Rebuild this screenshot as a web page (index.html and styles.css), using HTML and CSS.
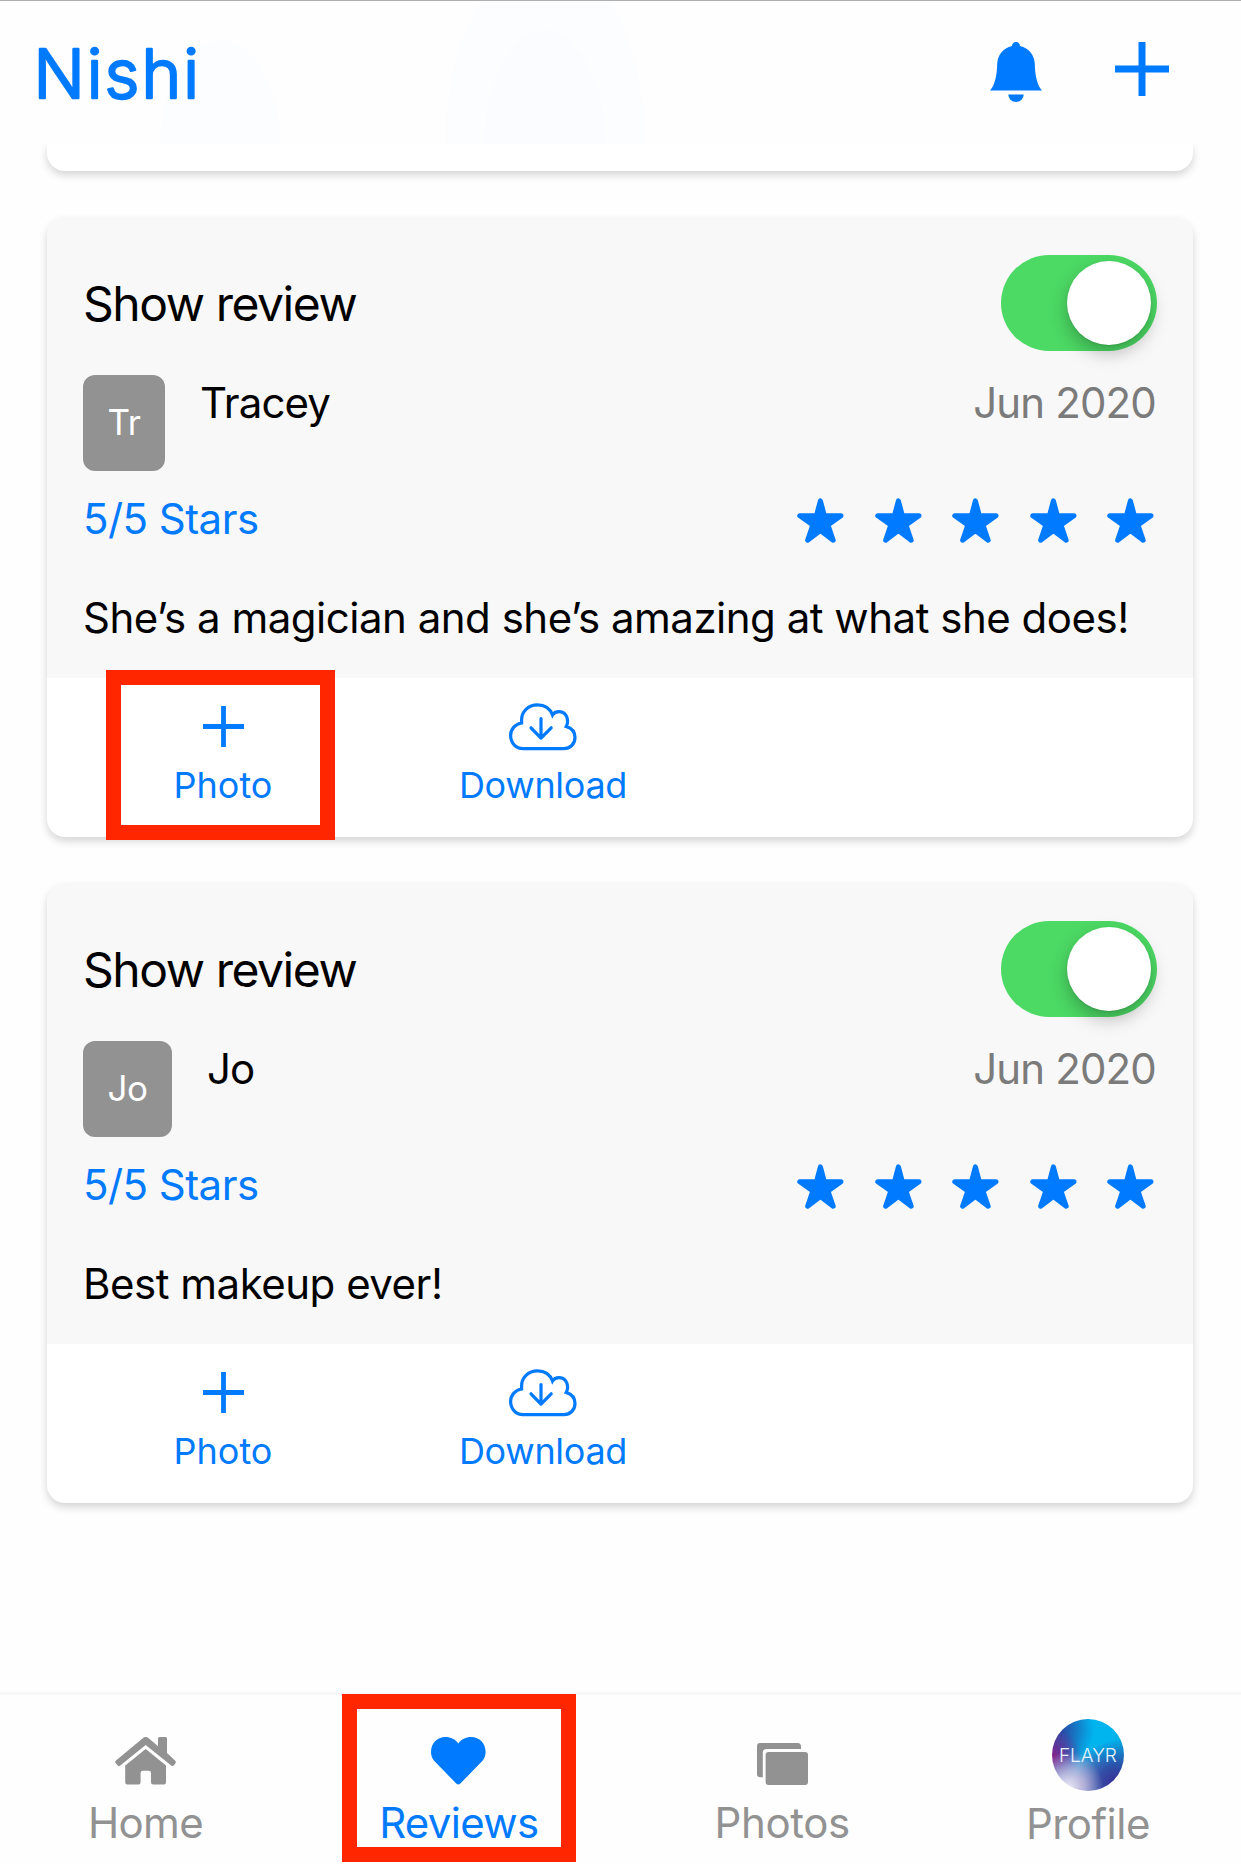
FILE: index.html
```html
<!DOCTYPE html>
<html lang="en">
<head>
<meta charset="utf-8">
<title>Reviews</title>
<link rel="stylesheet" href="styles.css">
</head>
<body>
<svg class="sprite" aria-hidden="true">
  <symbol id="star" viewBox="0 0 47 45"><path d="M23.4 2.8 27.4 17.8H44L31 27 36.2 42.2 23.4 32.4 10.6 42.2 15.8 27 2.8 17.8H19.4Z" fill="currentColor" stroke="currentColor" stroke-width="5" stroke-linejoin="round"/></symbol>
  <symbol id="plus" viewBox="0 0 41 41"><path d="M20.5 0V41M0 20.5H41" stroke="currentColor" stroke-width="4.8"/></symbol>
  <symbol id="cloud" viewBox="0 0 68 48"><path d="M14 45.6C7 45.6 1.6 39.8 1.6 32.5 1.6 26.5 6 21 12.6 20V17C12.6 9 19 1.9 28.5 1.9 35.5 1.9 41 5.5 43.5 12 45 9.5 47.5 8.6 50 8.6 55 8.6 58.6 12.5 58.6 18.5 58.6 20.5 58 22 57.2 23.5 62.5 25 66 29 66 34.5 66 41 61 45.6 55 45.6Z" fill="none" stroke="currentColor" stroke-width="3.2"/><path d="M32 15.5V35M22 24.8 32 35.2 42.2 24.8" fill="none" stroke="currentColor" stroke-width="3.2" stroke-linecap="round" stroke-linejoin="round"/></symbol>
</svg>
<div class="screen">
  <header class="header">
    <svg class="brand" viewBox="0 0 180 80"><text x="-2.5" y="60" textLength="165.5">Nishi</text></svg>
    <div class="header-actions">
      <svg class="bell" viewBox="0 0 52 60"><path fill="currentColor" d="M26 0C28.5 0 30 1.7 30 4 39 6.3 44.5 13 44.8 22 45 33 47 43 52 48.6H0C5 43 7 33 7.2 22 7.5 13 13 6.3 22 4 22 1.7 23.5 0 26 0ZM18.3 52.5H33.7C33.5 57 30 60 26 60S18.5 57 18.3 52.5Z"/></svg>
      <svg class="add" viewBox="0 0 54 54"><path d="M27 0V54M0 27H54" stroke="currentColor" stroke-width="7"/></svg>
    </div>
  </header>
  <main class="feed">
    <div class="card-tail"></div>
    <article class="card">
      <div class="card-body">
        <div class="row toggle-row"><span class="show">Show review</span><span class="toggle"><span class="knob"></span></span></div>
        <div class="row author-row"><span class="avatar avatar-tr">Tr</span><span class="name">Tracey</span><span class="date">Jun 2020</span></div>
        <div class="row rating-row"><span class="score">5/5 Stars</span><span class="stars"><svg><use href="#star"/></svg><svg><use href="#star"/></svg><svg><use href="#star"/></svg><svg><use href="#star"/></svg><svg><use href="#star"/></svg></span></div>
        <p class="comment">She’s a magician and she’s amazing at what she does!</p>
      </div>
      <div class="card-actions">
        <div class="action"><span class="action-icon"><svg class="i-plus"><use href="#plus"/></svg></span><span class="action-label">Photo</span><span class="mark mark-photo"></span></div>
        <div class="action"><span class="action-icon"><svg class="i-cloud"><use href="#cloud"/></svg></span><span class="action-label download">Download</span></div>
      </div>
    </article>
    <article class="card">
      <div class="card-body">
        <div class="row toggle-row"><span class="show">Show review</span><span class="toggle"><span class="knob"></span></span></div>
        <div class="row author-row"><span class="avatar avatar-jo">Jo</span><span class="name">Jo</span><span class="date">Jun 2020</span></div>
        <div class="row rating-row"><span class="score">5/5 Stars</span><span class="stars"><svg><use href="#star"/></svg><svg><use href="#star"/></svg><svg><use href="#star"/></svg><svg><use href="#star"/></svg><svg><use href="#star"/></svg></span></div>
        <p class="comment">Best makeup ever!</p>
      </div>
      <div class="card-actions">
        <div class="action"><span class="action-icon"><svg class="i-plus"><use href="#plus"/></svg></span><span class="action-label">Photo</span></div>
        <div class="action"><span class="action-icon"><svg class="i-cloud"><use href="#cloud"/></svg></span><span class="action-label download">Download</span></div>
      </div>
    </article>
  </main>
  <nav class="tabs">
    <div class="tab"><span class="tab-icon"><svg width="61" height="48" viewBox="0 0 61 48"><path fill="currentColor" d="M30.7 0Q32.5 0 34 1.4L43 9.2V1.5Q43 0 44.5 0H50.5Q52 0 52 1.5V16L60 23.5Q61.5 25 60.3 26.6L58.5 28.7Q57.5 29.6 56.5 28.7L30.7 8 5 28.7Q4 29.6 3 28.7L.7 26.2Q-.5 24.8 1 23.5L27.5 1.4Q29 0 30.7 0Z"/><path fill="currentColor" d="M30.7 12 51 28.4V45.3Q51 47.5 49 47.5H38.2Q36 47.5 36 45.3V36Q36 33.7 33.8 33.7H27.8Q25.6 33.7 25.6 36V45.3Q25.6 47.5 23.5 47.5H12.3Q10.2 47.5 10.2 45.3V28.4Z"/></svg></span><span class="tab-label home">Home</span></div>
    <div class="tab active"><span class="tab-icon"><svg width="55" height="48" viewBox="0 0 55 48"><path fill="currentColor" d="M27.3 6.5C24.5 2.3 19.5 0 14.5 0 6 0 0 6.5 0 15 0 19 1.3 21.7 3.8 24.5L25.5 46.8Q27.3 48 29.1 46.8L50.8 24.5C53.3 21.7 54.6 19 54.6 15 54.6 6.5 48.6 0 40.1 0 35.1 0 30.1 2.3 27.3 6.5Z"/></svg></span><span class="tab-label reviews">Reviews</span><span class="mark mark-tab"></span></div>
    <div class="tab"><span class="tab-icon"><svg width="51" height="42" viewBox="0 0 51 42"><path fill="currentColor" d="M3 0H40.5Q44 0 44 3.5V6H9.5Q5.8 6 5.8 9.5V34.3H3.5Q0 34.3 0 31V3Q0 0 3 0Z"/><rect x="8.6" y="9" width="42.4" height="33" rx="3" fill="currentColor"/></svg></span><span class="tab-label photos">Photos</span></div>
    <div class="tab"><span class="tab-icon full"><span class="logo">FLAYR</span></span><span class="tab-label profile">Profile</span></div>
  </nav>
</div>
</body>
</html>
```
FILE: styles.css
```css
* { box-sizing: border-box; }
body { margin: 0; background: #fefefe; color: #000; font-family: Inter, "Liberation Sans", sans-serif; font-size: 42px; line-height: 54px; }
svg { display: block; flex: none; }
.sprite { position: absolute; width: 0; height: 0; }
.screen { display: flex; flex-direction: column; height: 1864px; overflow: hidden; }

.header { display: flex; justify-content: space-between; align-items: flex-start; height: 144px; padding: 37px 72px 0 36px; border-top: 1px solid #aeaeb1; color: #007aff; background: radial-gradient(ellipse 100px 190px at 545px 144px, #fafcff 0 60%, #fcfdff 61% 99%, transparent), radial-gradient(ellipse 60px 105px at 220px 144px, #fcfdff 0 99%, transparent), #fefefe; }
.brand { width: 180px; height: 80px; overflow: visible; }
.brand text { font-size: 67.5px; font-weight: 300; fill: #007aff; stroke: #007aff; stroke-width: 2.5px; stroke-linejoin: round; }
.header-actions { display: flex; gap: 73px; padding-top: 4px; }
.bell { width: 52px; height: 60px; }
.add { width: 54px; height: 54px; }

.feed { flex: 1; padding: 0 48px 0 47px; }
.card-tail { height: 27px; margin-bottom: 47px; border-radius: 0 0 18px 18px; background: #fff; box-shadow: 0 4px 9px rgba(0,0,0,.17); clip-path: inset(0 -20px -20px -20px); }
.card { height: 619px; margin-bottom: 47px; border-radius: 18px; background: #fff; box-shadow: 0 4px 9px rgba(0,0,0,.17); }
.card-body { height: 460px; padding: 37px 36px 0; border-radius: 18px 18px 0 0; background: #f8f8f8; }
.row { display: flex; }
.toggle-row { height: 96px; align-items: center; justify-content: space-between; }
.show { padding-top: 2px; font-size: 48px; letter-spacing: -1.45px; }
.toggle { display: flex; justify-content: flex-end; width: 156px; height: 96px; padding: 6px; border-radius: 48px; background: #4cd964; }
.knob { width: 84px; height: 84px; border-radius: 50%; background: #fff; box-shadow: 0 8px 18px rgba(0,0,0,.26), 0 1px 2px rgba(0,0,0,.1); }
.author-row { height: 96px; margin-top: 24px; }
.avatar { display: flex; align-items: center; justify-content: center; height: 96px; margin-right: 35px; padding-bottom: 2px; border-radius: 12px; background: #929292; color: #fff; font-size: 35px; letter-spacing: -.5px; }
.avatar-tr { width: 82px; }
.avatar-jo { width: 89px; }
.name { padding-top: 1px; letter-spacing: -.9px; }
.date { margin: 0 1px 0 auto; padding-top: 1px; color: #7b7b7b; letter-spacing: -.85px; }
.rating-row { justify-content: space-between; height: 54px; margin-top: 21px; }
.score { color: #007aff; letter-spacing: -.55px; }
.stars { display: flex; gap: 30.5px; padding: 6px 3px 0 0; color: #007aff; }
.stars svg { width: 47px; height: 45px; }
.comment { margin: 45px 0 0; white-space: nowrap; letter-spacing: -.49px; }

.card-actions { display: flex; height: 159px; padding-left: 16px; color: #007aff; }
.action { position: relative; width: 320px; padding-top: 25px; display: flex; flex-direction: column; align-items: center; }
.action-icon { display: flex; align-items: center; height: 48px; }
.i-plus { width: 41px; height: 41px; margin-bottom: 1px; }
.i-cloud { width: 68px; height: 48px; }
.action-label { margin-top: 12px; font-size: 36px; line-height: 44px; }
.download { letter-spacing: -.3px; }
.mark { position: absolute; border: 15px solid #ff2600; }
.mark-photo { left: 43px; top: -8px; width: 229px; height: 170px; }

.tabs { display: flex; justify-content: space-around; height: 172px; padding: 24px 3px 0 0; border-top: 3px solid #f8f8f8; color: #929292; }
.tab { position: relative; display: flex; flex-direction: column; align-items: center; }
.tab.active { color: #007aff; }
.tab-icon { display: flex; align-items: flex-end; height: 72px; padding-bottom: 6px; }
.tab-icon.full { padding: 0; }
.tab-label { margin-top: 5px; }
.home { letter-spacing: -.7px; }
.reviews { letter-spacing: -.7px; }
.photos { letter-spacing: -.4px; }
.profile { margin-top: 6px; letter-spacing: -.5px; }
.mark-tab { left: calc(50% - 117px); top: -25px; width: 234px; height: 168px; }
.logo { display: flex; align-items: center; justify-content: center; width: 72px; height: 72px; border-radius: 50%; color: #e5f3ff; font: 300 19px/1 Inter, sans-serif; background: radial-gradient(circle at 22% 95%, #e9e6f4 0, rgba(215,205,232,.8) 14%, transparent 40%), radial-gradient(circle at 0 52%, #8a1f88 0, rgba(110,40,145,.8) 14%, transparent 36%), radial-gradient(circle at 90% 90%, #3a2c94 0, rgba(50,60,155,.8) 20%, transparent 48%), radial-gradient(circle at 5% 15%, #2b3c9c 0, transparent 42%), radial-gradient(circle at 45% 90%, #8d97cb 0, transparent 45%), radial-gradient(circle at 65% 20%, #00b4ee 0 20%, #148fcf 75%); }
```
